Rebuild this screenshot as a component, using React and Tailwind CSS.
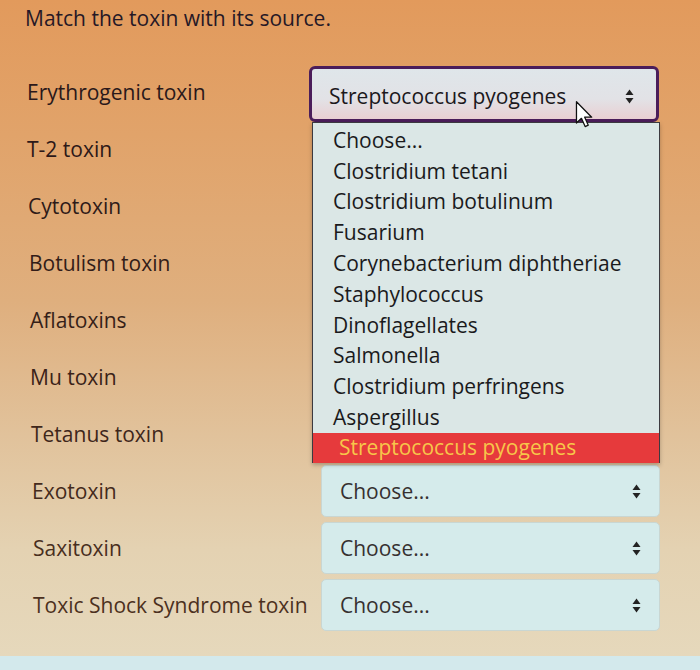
import React from "react";

const rows = [
  { label: "Erythrogenic toxin", pl: "pl-[27px]", color: "text-[#2a181a]" },
  { label: "T-2 toxin", pl: "pl-[27px]", color: "text-[#2c1818]" },
  { label: "Cytotoxin", pl: "pl-[28px]", color: "text-[#2e1a18]" },
  { label: "Botulism toxin", pl: "pl-[29px]", color: "text-[#321c18]" },
  { label: "Aflatoxins", pl: "pl-[30px]", color: "text-[#361f18]" },
  { label: "Mu toxin", pl: "pl-[30px]", color: "text-[#3a2218]" },
  { label: "Tetanus toxin", pl: "pl-[31px]", color: "text-[#3e261a]" },
  { label: "Exotoxin", pl: "pl-[32px]", color: "text-[#442a1c]" },
  { label: "Saxitoxin", pl: "pl-[33px]", color: "text-[#482e1e]" },
  { label: "Toxic Shock Syndrome toxin", pl: "pl-[33px]", color: "text-[#4c3020]" },
];

const options = [
  "Choose...",
  "Clostridium tetani",
  "Clostridium botulinum",
  "Fusarium",
  "Corynebacterium diphtheriae",
  "Staphylococcus",
  "Dinoflagellates",
  "Salmonella",
  "Clostridium perfringens",
  "Aspergillus",
];

function Arrows() {
  return (
    <svg width="9" height="15" viewBox="0 0 9 15">
      <path d="M4.5 0.5 L8.5 6 L0.5 6 Z" fill="#222" />
      <path d="M4.5 14.5 L8.5 9 L0.5 9 Z" fill="#222" />
    </svg>
  );
}

function Select({ text }) {
  return (
    <div className="w-[339px] h-[52px] rounded-[5px] border border-[#c9d6d2] bg-[#d5ebeb] flex items-center justify-between pl-[18px] pr-[18px]">
      <span className="text-[21px] text-[#363030] leading-none">{text}</span>
      <Arrows />
    </div>
  );
}

export default function App() {
  return (
    <div
      className="relative w-[700px] h-[670px] overflow-hidden bg-[linear-gradient(180deg,#e29a5c_0%,#e1a36a_20%,#dfaf7e_45%,#e1c29b_65%,#e4d2b2_82%,#e6d9bd_100%)]"
      style={{ fontFamily: '"Open Sans", "Noto Sans", sans-serif' }}
    >
      <div className="pl-[25px] pt-[4px] text-[21px] leading-[28px] text-[#261826]">
        Match the toxin with its source.
      </div>

      <div className="mt-[34px] flex flex-col gap-[5px]">
        {rows.map((r, i) => (
          <div key={r.label} className="flex h-[52px] items-start">
            <div className={`w-[309px] h-[52px] flex items-center ${r.pl} text-[21px] leading-none ${r.color}`}>
              {r.label}
            </div>
            {i === 0 ? (
              <div className="w-[350px] h-[56px] rounded-[6px] border-[3px] border-[#4b1d5a] bg-[linear-gradient(180deg,#dfe6ea_0%,#e2e2e6_60%,#e9cfd2_100%)] flex items-center justify-between pl-[17px] pr-[22px] pt-[5px]">
                <span className="text-[21px] text-[#1c181c] leading-none">Streptococcus pyogenes</span>
                <Arrows />
              </div>
            ) : i >= 7 ? (
              <div className="pl-[12px]">
                <Select text="Choose..." />
              </div>
            ) : null}
          </div>
        ))}
      </div>

      {/* open dropdown list */}
      <div className="absolute left-[312px] top-[122px] w-[348px] h-[341px] border border-[#3c3a40] bg-[#dbe7e6] pt-[2px] shadow-[0_2px_4px_rgba(0,0,0,0.25)]">
        {options.map((o) => (
          <div key={o} className="h-[30.8px] flex items-center pl-[20px] text-[21px] leading-none text-[#1a1a1c]">
            {o}
          </div>
        ))}
        <div className="h-[30px] flex items-center pl-[26px] bg-[#e63a3c] text-[21px] leading-none text-[#f7c64a]">
          Streptococcus pyogenes
        </div>
      </div>

      {/* mouse cursor */}
      <svg className="absolute left-[575px] top-[101px]" width="20" height="27" viewBox="0 0 13 19">
        <path
          d="M0.5 0.5 L0.5 15.5 L4 12.2 L6.6 18 L8.8 17 L6.3 11.4 L11.2 11.4 Z"
          fill="#fff"
          stroke="#111"
          strokeWidth="0.9"
          strokeLinejoin="round"
        />
      </svg>

      {/* bottom screen edge */}
      <div className="absolute left-0 bottom-0 w-full h-[14px] bg-[#d3e9ec]" />
    </div>
  );
}
